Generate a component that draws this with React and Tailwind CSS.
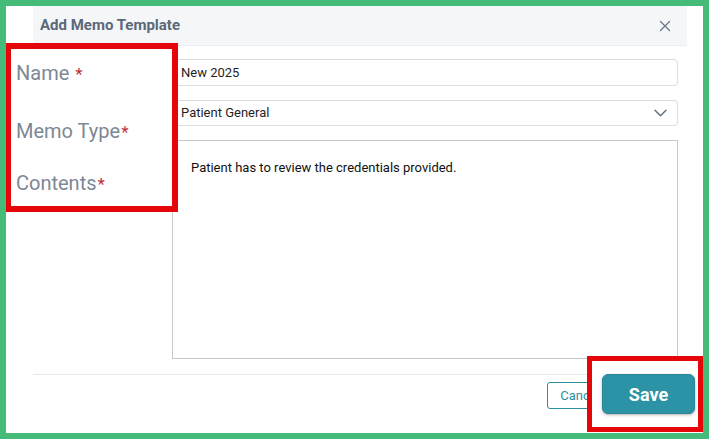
import React from "react";

function CloseIcon() {
    return (
        <svg width="12" height="12" viewBox="0 0 12 12" fill="none" stroke="#6b7785" strokeWidth="1.3" strokeLinecap="round">
            <path d="M1.5 1.5l9 9M10.5 1.5l-9 9" />
        </svg>
    );
}

function Chevron() {
    return (
        <svg width="13" height="8" viewBox="0 0 13 8" fill="none" stroke="#5f6b78" strokeWidth="1.4" strokeLinecap="round" strokeLinejoin="round">
            <path d="M1 1.2l5.5 5.5L12 1.2" />
        </svg>
    );
}

function Label({ text, spaced }) {
    return (
        <div className="h-[24px] leading-[24px] text-[20px] text-[#7d8894] whitespace-nowrap">
            {text}
            {spaced && <span>&nbsp;</span>}
            <span className="text-[17px] text-[#c0303a] ml-[1px]">*</span>
        </div>
    );
}

export default function App() {
    return (
        <div className="relative w-[709px] h-[439px] border-[6px] border-[#44bb78] bg-white overflow-hidden flex flex-col font-['Roboto',sans-serif]">
            {/* header */}
            <div className="ml-[27px] mr-[16px] h-[40px] shrink-0 bg-[#f5f6f8] border-b border-[#eceef1] flex items-center justify-between pl-[7px] pr-[16px]">
                <h1 className="text-[15px] font-bold text-[#5b6878]">Add Memo Template</h1>
                <CloseIcon />
            </div>

            {/* body */}
            <div className="flex">
                <div className="w-[166px] shrink-0 pl-[10px] pt-[15px]">
                    <Label text="Name" spaced />
                    <div className="mt-[34px]"><Label text="Memo Type" /></div>
                    <div className="mt-[28px]"><Label text="Contents" /></div>
                </div>
                <div className="w-[506px] pt-[13px] flex flex-col gap-[14px]">
                    <div className="h-[27px] border border-[#d8dde3] rounded-[4px] flex items-center pl-[8px] text-[13px] text-[#1f1f1f]">
                        New 2025
                    </div>
                    <div className="h-[26px] border border-[#d8dde3] rounded-[4px] flex items-center justify-between pl-[8px] pr-[10px] text-[13px] text-[#1f1f1f]">
                        <span>Patient General</span>
                        <Chevron />
                    </div>
                    <div className="h-[219px] border border-[#c9c9c9] pl-[18px] pt-[17px] text-[13px] leading-[20px] text-[#111]">
                        Patient has to review the credentials provided.
                    </div>
                </div>
            </div>

            {/* footer */}
            <div className="ml-[27px] mr-[16px] mt-[15px] border-t border-[#e8e8e8]" />
            <div className="flex justify-end mt-[7px] mr-[90px]">
                <button className="h-[27px] w-[66px] border border-[#2a8fa0] rounded-[3px] text-[13px] text-[#2a8fa0] bg-white">
                    Cancel
                </button>
            </div>

            {/* annotation boxes */}
            <div className="absolute left-[-1px] top-[37px] w-[173px] h-[169px] border-[6px] border-[#e5060a] pointer-events-none" />
            <div className="absolute left-[581px] top-[350px] w-[116px] h-[76px] border-[5px] border-[#e5060a] bg-white pl-[10px] pt-[13px]">
                <button className="w-[93px] h-[40px] rounded-[6px] bg-[#2b93a5] border border-[#2a8797] shadow-[0_1px_3px_rgba(0,0,0,0.3)] text-white text-[18px] font-bold">
                    Save
                </button>
            </div>
        </div>
    );
}
